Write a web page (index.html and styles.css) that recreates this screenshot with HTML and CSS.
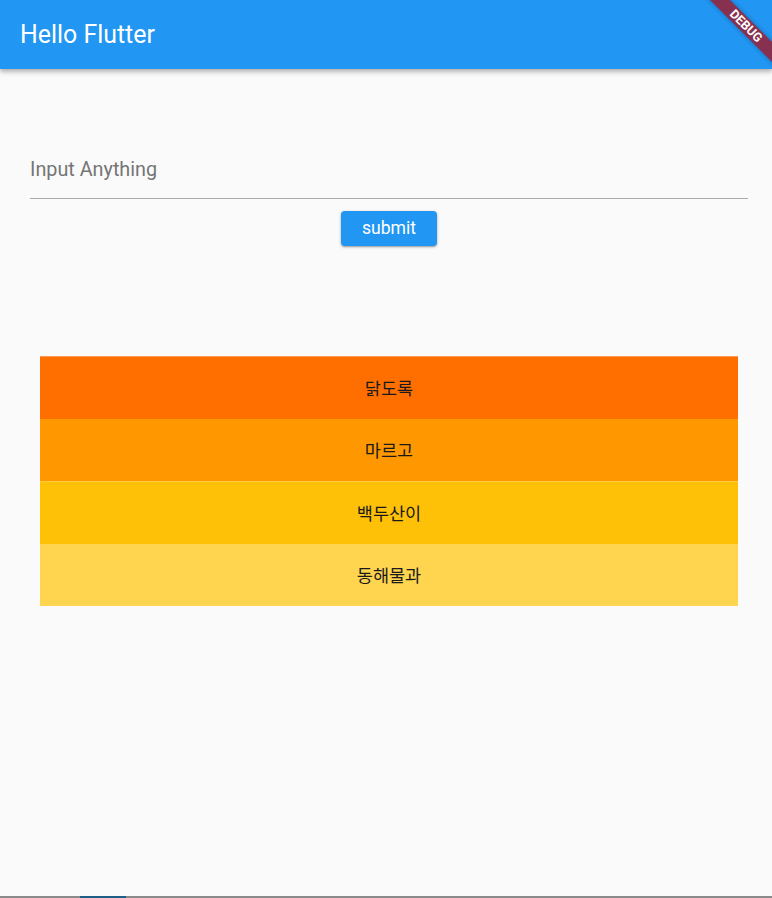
FILE: index.html
```html
<!DOCTYPE html>
<html lang="ko">
<head>
<meta charset="utf-8">
<title>Hello Flutter</title>
<link rel="stylesheet" href="styles.css">
</head>
<body>
<div class="app">
  <header class="appbar">
    <h1 class="title">Hello Flutter</h1>
  </header>
  <main class="body">
    <div class="field">
      <input class="input" type="text" placeholder="Input Anything">
    </div>
    <div class="actions">
      <button class="submit" type="button">submit</button>
    </div>
    <ul class="list">
      <li class="item c1">닭도록</li>
      <li class="item c2">마르고</li>
      <li class="item c3">백두산이</li>
      <li class="item c4">동해물과</li>
    </ul>
  </main>
  <div class="bottom"><span class="thumb"></span></div>
  <div class="banner"><span>DEBUG</span></div>
</div>
</body>
</html>
```
FILE: styles.css
```css
* { box-sizing: border-box; }
html, body { margin: 0; padding: 0; }
body {
  width: 772px;
  height: 898px;
  overflow: hidden;
  background: #fafafa;
  font-family: Roboto, "Noto Sans CJK KR", sans-serif;
}
.app {
  position: relative;
  width: 772px;
  height: 898px;
  display: flex;
  flex-direction: column;
  overflow: hidden;
}
.appbar {
  height: 69px;
  flex: none;
  background: #2196f3;
  display: flex;
  align-items: center;
  padding-left: 20px;
  box-shadow: 0 2px 4px rgba(0,0,0,0.2), 0 4px 5px rgba(0,0,0,0.12);
  position: relative;
  z-index: 1;
}
.title {
  margin: 0;
  color: #fff;
  font-weight: 400;
  font-size: 24.9px;
  line-height: 1;
  padding-top: 1px;
}
.body {
  flex: 1;
  padding: 0 24px 0 30px;
}
.field {
  margin-top: 79px;
  border-bottom: 1.5px solid #aaaaaa;
  height: 51px;
  display: flex;
  align-items: flex-start;
}
.input {
  border: none;
  outline: none;
  background: transparent;
  font-family: Roboto, sans-serif;
  font-size: 19.8px;
  color: #212121;
  padding: 0;
  margin-top: 9px;
  width: 100%;
  height: 24px;
}
.input::placeholder { color: #757575; }
.actions {
  display: flex;
  justify-content: center;
  margin-top: 12px;
}
.submit {
  width: 96px;
  height: 35px;
  border: none;
  border-radius: 4px;
  background: #2196f3;
  color: #fff;
  font-family: Roboto, sans-serif;
  font-weight: 400;
  font-size: 17.6px;
  padding: 0 0 1px;
  box-shadow: 0 1px 3px rgba(0,0,0,0.3), 0 1px 1px rgba(0,0,0,0.14);
}
.list {
  list-style: none;
  margin: 110px 0 0 10px;
  padding: 0;
  width: 698px;
}
.item {
  height: 62.5px;
  display: flex;
  align-items: center;
  justify-content: center;
  font-family: "Noto Sans CJK KR", sans-serif;
  font-size: 17.5px;
  color: #1a1a1a;
}
.c1 { background: #ff6f00; border-top: 1px solid #ff9a55; }
.c2 { background: #ff9800; }
.c3 { background: #ffc107; border-top: 1px solid #ffcc40; }
.c4 { background: #ffd54f; }
.bottom {
  height: 2px;
  flex: none;
  background: #8a8a8a;
  position: relative;
}
.thumb {
  position: absolute;
  left: 80px;
  top: 0;
  width: 46px;
  height: 2px;
  background: #1d5e86;
}
.banner {
  position: absolute;
  top: 0;
  right: 0;
  width: 110px;
  height: 110px;
  overflow: hidden;
  pointer-events: none;
  z-index: 5;
}
.banner span {
  position: absolute;
  width: 130px;
  height: 14px;
  left: 50%;
  top: 50%;
  margin-left: -65px;
  margin-top: -7px;
  transform: translate(29px, -29px) rotate(45deg);
  background: #88304f;
  box-shadow: 0 0 5px rgba(0,0,0,0.3);
  color: #fff;
  font-family: Roboto, sans-serif;
  font-weight: 700;
  font-size: 12.5px;
  line-height: 14px;
  text-align: center;
}
```
